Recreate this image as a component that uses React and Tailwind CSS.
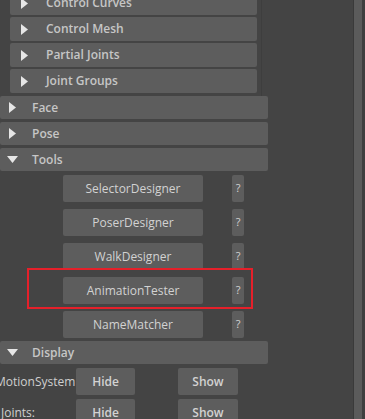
import React from "react";

const font = { fontFamily: '"Open Sans", "Noto Sans", sans-serif' };

function TriRight() {
  return (
    <svg width="7" height="11" viewBox="0 0 7 11" className="shrink-0">
      <polygon points="0,0 7,5.5 0,11" fill="#e6e6e6" />
    </svg>
  );
}
function TriDown() {
  return (
    <svg width="11" height="7" viewBox="0 0 11 7" className="shrink-0">
      <polygon points="0,0 11,0 5.5,7" fill="#e6e6e6" />
    </svg>
  );
}

function SubHeader({ label }) {
  return (
    <div className="h-[24px] rounded-[2px] bg-[#5d5d5d] flex items-center pl-[11px] text-[12px] font-semibold text-[#c6c6c6]">
      <TriRight />
      <span className="ml-[18px]">{label}</span>
    </div>
  );
}

function Header({ label, open }) {
  return (
    <div className="h-[23px] w-[268px] rounded-[2px] bg-[#5d5d5d] flex items-center text-[12px] font-semibold text-[#c6c6c6]">
      {open ? (
        <span className="ml-[7px] flex items-center">
          <TriDown />
        </span>
      ) : (
        <span className="ml-[9px] flex items-center">
          <TriRight />
        </span>
      )}
      <span className={open ? "ml-[14px]" : "ml-[16px]"}>{label}</span>
    </div>
  );
}

function ToolRow({ label }) {
  return (
    <div className="flex h-[27px] items-stretch">
      <div className="ml-[63px] w-[140px] rounded-[2px] bg-[#5d5d5d] flex items-center justify-center text-[12px] text-[#d2d2d2]">
        {label}
      </div>
      <div className="ml-[29px] w-[12px] rounded-[2px] bg-[#5d5d5d] flex items-center justify-center text-[11px] text-[#d2d2d2]">
        ?
      </div>
    </div>
  );
}

function DisplayRow({ label, offset }) {
  return (
    <div className="flex h-[27px] items-stretch">
      <div className="w-[76px] overflow-hidden flex items-center text-[12px] text-[#cfcfcf] whitespace-nowrap">
        <span className={offset}>{label}</span>
      </div>
      <div className="w-[59px] rounded-[2px] bg-[#5d5d5d] flex items-center justify-center text-[12px] font-semibold text-[#d2d2d2]">
        Hide
      </div>
      <div className="ml-[43px] w-[60px] rounded-[2px] bg-[#5d5d5d] flex items-center justify-center text-[12px] font-semibold text-[#d2d2d2]">
        Show
      </div>
    </div>
  );
}

export default function App() {
  return (
    <div className="w-[365px] h-[419px] overflow-hidden bg-[#444444] flex" style={font}>
      <div className="w-[353px] flex flex-col">
        <div className="mt-[-9px] w-[262px] pl-[10px] pr-[4px] flex flex-col gap-[2px] border-r border-[#3e3e3e] pb-[3px]">
          <SubHeader label="Control Curves" />
          <SubHeader label="Control Mesh" />
          <SubHeader label="Partial Joints" />
          <SubHeader label="Joint Groups" />
        </div>
        <div className="flex flex-col gap-[3px]">
          <Header label="Face" />
          <Header label="Pose" />
          <Header label="Tools" open />
        </div>
        <div className="mt-[4px] flex flex-col gap-[7px] relative">
          <ToolRow label="SelectorDesigner" />
          <ToolRow label="PoserDesigner" />
          <ToolRow label="WalkDesigner" />
          <ToolRow label="AnimationTester" />
          <ToolRow label="NameMatcher" />
          <div className="absolute left-[27px] top-[93px] w-[226px] h-[41px] border-2 border-[#e5202a]" />
        </div>
        <div className="mt-[3px]">
          <Header label="Display" open />
        </div>
        <div className="mt-[4px] flex flex-col gap-[4px]">
          <DisplayRow label="MotionSystem" offset="ml-[-5px]" />
          <DisplayRow label="Joints:" offset="ml-[1px]" />
        </div>
      </div>
      <div className="w-[12px] h-full flex">
        <div className="w-[1px] bg-[#3a3a3a]" />
        <div className="w-[8px] bg-[#5b5b5b]" />
        <div className="w-[3px] bg-[#3f3f3f]" />
      </div>
    </div>
  );
}
